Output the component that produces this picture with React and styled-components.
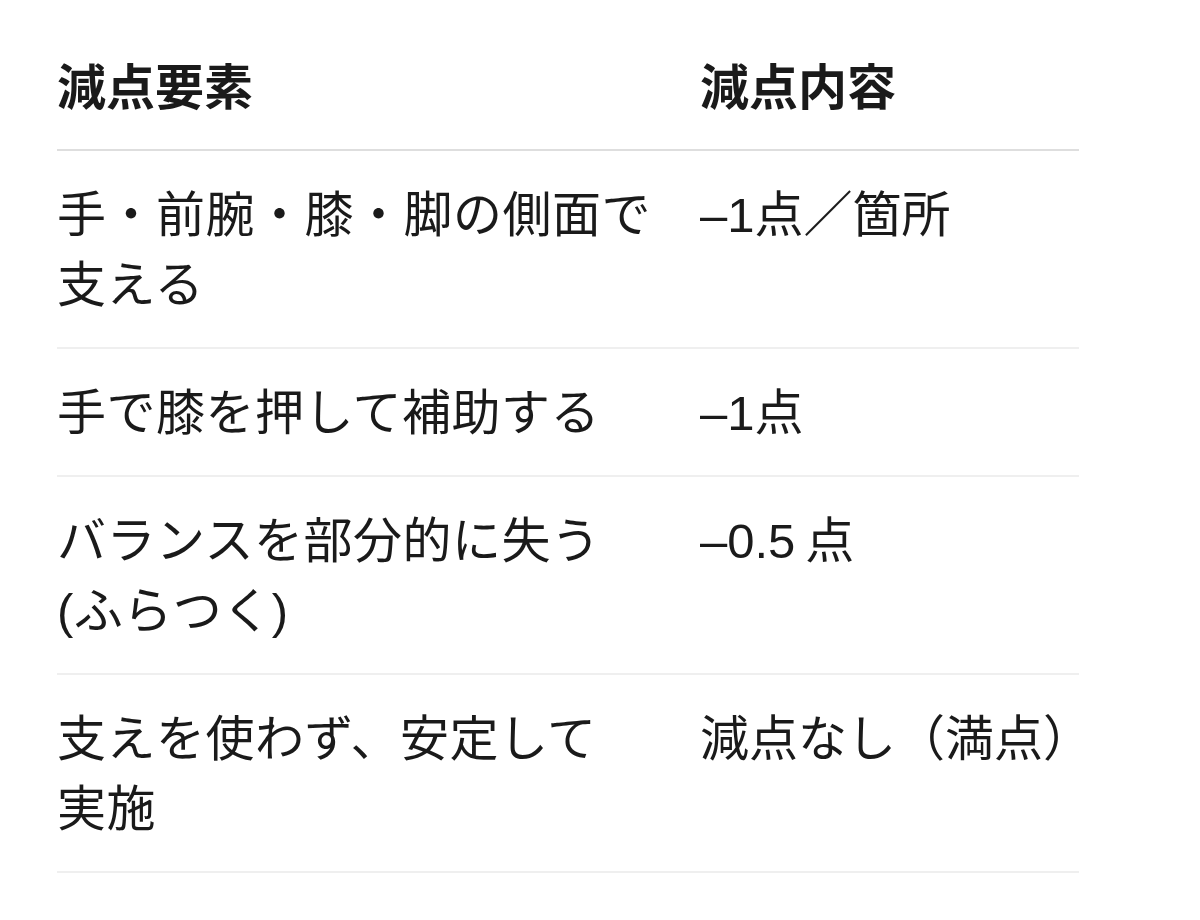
import React from 'react';
import styled, { createGlobalStyle } from 'styled-components';

const GlobalStyle = createGlobalStyle`
  html, body {
    margin: 0;
    padding: 0;
    background: #ffffff;
  }
  body {
    font-family: 'Liberation Sans', 'Noto Sans CJK JP', sans-serif;
    color: #1a1a1a;
  }
`;

const Page = styled.div`
  width: 1200px;
  height: 920px;
  padding: 21px 121px 0 57px;
  box-sizing: border-box;
`;

const Table = styled.table`
  width: 1022px;
  border-collapse: collapse;
  table-layout: fixed;
`;

const HeadCell = styled.th`
  text-align: left;
  font-size: 49px;
  font-weight: 700;
  line-height: 70px;
  padding: 32px 0 26px;
  border-bottom: 2px solid #dedede;
  width: ${(p) => p.$width || 'auto'};
`;

const Cell = styled.td`
  font-size: 49px;
  font-weight: 400;
  line-height: 70px;
  padding: 29px ${(p) => (p.$first ? '40px' : '0')} 27px 0;
  vertical-align: top;
  letter-spacing: ${(p) => (p.$first ? '0.5px' : '0')};
`;

const Row = styled.tr`
  border-bottom: 2px solid #efefef;
`;

const Word = styled.span`
  white-space: nowrap;
`;

const rows = [
  { item: <>手・前腕・膝・脚の側面で<Word>支える</Word></>, value: '–1点／箇所' },
  { item: '手で膝を押して補助する', value: '–1点' },
  { item: <>バランスを部分的に失う<Word>(ふらつく)</Word></>, value: '–0.5\u2009点' },
  { item: <>支えを使わず、安定して<Word>実施</Word></>, value: '減点なし（満点）' },
];

export default function App() {
  return (
    <Page>
      <GlobalStyle />
      <Table>
        <thead>
          <tr>
            <HeadCell $width="643px">減点要素</HeadCell>
            <HeadCell>減点内容</HeadCell>
          </tr>
        </thead>
        <tbody>
          {rows.map((r, i) => (
            <Row key={i}>
              <Cell $first>{r.item}</Cell>
              <Cell>{r.value}</Cell>
            </Row>
          ))}
        </tbody>
      </Table>
    </Page>
  );
}
